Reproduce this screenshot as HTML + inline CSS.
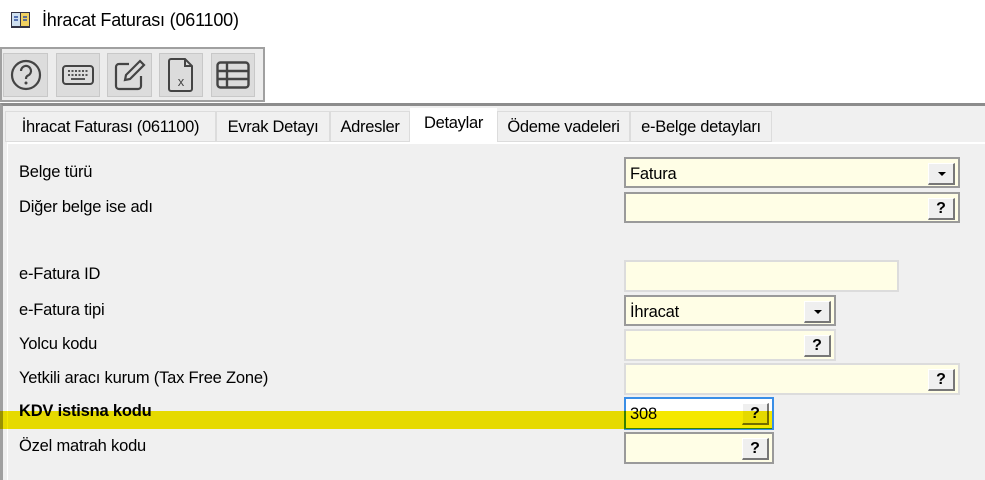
<!DOCTYPE html>
<html><head><meta charset="utf-8"><style>
*{box-sizing:border-box;margin:0;padding:0}
body{width:985px;height:480px;background:#fff;font-family:"Liberation Sans","DejaVu Sans",sans-serif;position:relative;overflow:hidden;color:#000}
.a{position:absolute}
.lbl{position:absolute;left:19px;font-size:16.5px;line-height:18px;letter-spacing:-0.2px}
.inp{position:absolute;background:#fffee6;border:2px solid #9a9a9a}
.inp.l{border:2px solid #dcdcdc}
.btn{position:absolute;right:3px;top:4px;width:27px;height:22px;background:#efefef;border-top:1px solid #fff;border-left:1px solid #fff;border-right:2px solid #777;border-bottom:2px solid #777;font:bold 16px "Liberation Sans",sans-serif;text-align:center;line-height:19px}
.btn.d::after{content:"";position:absolute;left:9px;top:8px;border-left:4px solid transparent;border-right:4px solid transparent;border-top:4px solid #000}
.tab{position:absolute;top:111px;height:31px;border:1px solid #dcdcdc;background:#f0f0f0;font-size:16.5px;line-height:30px;text-align:center;letter-spacing:-0.3px;white-space:nowrap}
.tb{position:absolute;top:53px;height:44px;background:#dcdcdc;border:1px solid #c8c8c8}
.tb svg{position:absolute;left:50%;top:50%;transform:translate(-50%,-50%)}
.val{position:absolute;left:4px;top:6px;font-size:16.5px;letter-spacing:-0.2px}
</style></head><body>
<svg class="a" style="left:10px;top:10px" width="21" height="20" viewBox="0 0 21 20"><rect x="1" y="2" width="19" height="16" fill="#334" /><rect x="2" y="3" width="8" height="13" fill="#cfe0f0"/><rect x="11" y="3" width="8" height="13" fill="#f0d060"/><path d="M4 7h4M4 10h4M13 7h4M13 10h4" stroke="#3050a0" stroke-width="1.5"/></svg>
<div class="a" style="left:42px;top:10px;font-size:18px;letter-spacing:-0.2px">İhracat Faturası (061100)</div>

<div class="a" style="left:0;top:47px;width:265px;height:55px;border:2px solid #a0a0a0;background:#ececec"></div>
<div class="tb" style="left:3px;width:45px"><svg width="34" height="34" viewBox="0 0 34 34"><circle cx="17" cy="17" r="14" fill="none" stroke="#444" stroke-width="2.2"/><path d="M12 13a5 5 0 1 1 7 4.5c-1.5.8-2 1.5-2 3.5" fill="none" stroke="#444" stroke-width="2.2"/><circle cx="17" cy="25" r="1.5" fill="#444"/></svg></div>
<div class="tb" style="left:56px;width:44px"><svg width="32" height="20" viewBox="0 0 32 20"><rect x="1" y="1" width="30" height="18" rx="3" fill="none" stroke="#444" stroke-width="2"/><path d="M6 6h20M6 10h20" stroke="#555" stroke-width="2" stroke-dasharray="2 1.5"/><path d="M9 14h14" stroke="#555" stroke-width="2"/></svg></div>
<div class="tb" style="left:107px;width:45px"><svg width="34" height="34" viewBox="0 0 34 34"><path d="M16 6H6a3 3 0 0 0-3 3v19a3 3 0 0 0 3 3h19a3 3 0 0 0 3-3V18" fill="none" stroke="#444" stroke-width="2.2"/><path d="M27 3l4 4-14 14-5 1 1-5z" fill="none" stroke="#444" stroke-width="2.2"/></svg></div>
<div class="tb" style="left:159px;width:44px"><svg width="26" height="34" viewBox="0 0 26 34"><path d="M3 1h14l7 7v23a2 2 0 0 1-2 2H3a2 2 0 0 1-2-2V3a2 2 0 0 1 2-2z" fill="none" stroke="#444" stroke-width="2"/><path d="M17 1v7h7" fill="none" stroke="#444" stroke-width="2"/><text x="13" y="28" font-size="13" text-anchor="middle" fill="#444" font-family="Liberation Sans">x</text></svg></div>
<div class="tb" style="left:211px;width:44px"><svg width="34" height="28" viewBox="0 0 34 28"><rect x="1.5" y="1.5" width="31" height="25" rx="3" fill="none" stroke="#444" stroke-width="2.4"/><path d="M2 10h30M2 18h30M11 2v24" stroke="#444" stroke-width="2.4"/></svg></div>

<div class="a" style="left:0;top:103px;width:985px;height:377px;background:#f0f0f0;border-top:3px solid #8c8c8c;border-left:3px solid #a0a0a0"></div>
<div class="a" style="left:7px;top:142px;width:978px;height:338px;border-top:2px solid #fff;border-left:1px solid #fff"></div>
<div class="tab" style="left:5px;width:211px">İhracat Faturası (061100)</div>
<div class="tab" style="left:216px;width:114px">Evrak Detayı</div>
<div class="tab" style="left:330px;width:80px">Adresler</div>
<div class="tab" style="left:410px;top:108px;height:36px;width:87px;background:#fff;border-color:#fff;line-height:28px">Detaylar</div>
<div class="tab" style="left:497px;width:133px">Ödeme vadeleri</div>
<div class="tab" style="left:630px;width:142px">e-Belge detayları</div>

<div class="lbl" style="top:163px">Belge türü</div>
<div class="lbl" style="top:198px">Diğer belge ise adı</div>
<div class="lbl" style="top:265px">e-Fatura ID</div>
<div class="lbl" style="top:301px">e-Fatura tipi</div>
<div class="lbl" style="top:335px">Yolcu kodu</div>
<div class="lbl" style="top:369px">Yetkili aracı kurum (Tax Free Zone)</div>
<div class="lbl" style="top:402px;font-weight:bold">KDV istisna kodu</div>
<div class="lbl" style="top:437px">Özel matrah kodu</div>

<div class="inp" style="left:624px;top:157px;width:336px;height:31px"><span class="val">Fatura</span><div class="btn d"></div></div>
<div class="inp" style="left:624px;top:192px;width:336px;height:31px"><div class="btn">?</div></div>
<div class="inp l" style="left:624px;top:260px;width:275px;height:32px"></div>
<div class="inp" style="left:624px;top:295px;width:212px;height:31px"><span class="val">İhracat</span><div class="btn d"></div></div>
<div class="inp l" style="left:624px;top:329px;width:212px;height:32px"><div class="btn">?</div></div>
<div class="inp l" style="left:624px;top:363px;width:336px;height:32px"><div class="btn">?</div></div>
<div class="inp" style="left:624px;top:397px;width:150px;height:33px;background:#fff;border-color:#3a8ee6"><span class="val">308</span><div class="btn">?</div></div>
<div class="inp" style="left:624px;top:432px;width:150px;height:32px"><div class="btn">?</div></div>

<div class="a" style="left:0;top:411px;width:772px;height:18px;background:#f5e800;mix-blend-mode:multiply"></div>
</body></html>
